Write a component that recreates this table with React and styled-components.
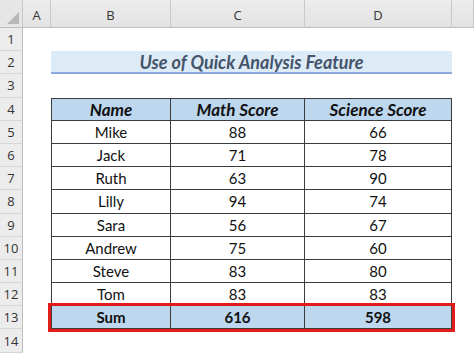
import React from 'react'
import styled, { createGlobalStyle } from 'styled-components'

const rows = [
  ['Mike', 88, 66],
  ['Jack', 71, 78],
  ['Ruth', 63, 90],
  ['Lilly', 94, 74],
  ['Sara', 56, 67],
  ['Andrew', 75, 60],
  ['Steve', 83, 80],
  ['Tom', 83, 83]
]

export default function App () {
  return (
    <>
      <GlobalStyle />
      <Sheet>
        <Corner><CornerMark /></Corner>
        <ColHead>A</ColHead>
        <ColHead>B</ColHead>
        <ColHead>C</ColHead>
        <ColHead>D</ColHead>
        <ColHead />

        <RowHead>1</RowHead>
        <Blank $span={5} />

        <RowHead>2</RowHead>
        <Blank />
        <Title>Use of Quick Analysis Feature</Title>
        <Blank />

        <RowHead>3</RowHead>
        <Blank $span={5} />

        <RowHead>4</RowHead>
        <Blank />
        <TableRow>
          <Cell $head $first>Name</Cell>
          <Cell $head>Math Score</Cell>
          <Cell $head>Science Score</Cell>
        </TableRow>
        <Blank />

        {rows.map(([name, math, science], i) => (
          <React.Fragment key={name}>
            <RowHead>{i + 5}</RowHead>
            <Blank />
            <TableRow>
              <Cell $first>{name}</Cell>
              <Cell>{math}</Cell>
              <Cell>{science}</Cell>
            </TableRow>
            <Blank />
          </React.Fragment>
        ))}

        <RowHead>13</RowHead>
        <Blank />
        <TableRow $selected>
          <Cell $sum $first>Sum</Cell>
          <Cell $sum>616</Cell>
          <Cell $sum>598</Cell>
        </TableRow>
        <Blank />

        <RowHead>14</RowHead>
        <Blank $span={5} />
      </Sheet>
    </>
  )
}

const GlobalStyle = createGlobalStyle`
  html, body {
    margin: 0;
    padding: 0;
    background: #fff;
  }
  body {
    font-family: Lato, "Open Sans", sans-serif;
    color: #111;
  }
`

const Sheet = styled.div`
  display: grid;
  grid-template-columns: 23px 28px 120px 134px 147px 1fr;
  grid-template-rows: 28px repeat(14, 23.2px);
  width: 474px;
  height: 353px;
  overflow: hidden;
  background: #fff;
`

const Corner = styled.div`
  position: relative;
  background: #e6e6e6;
  border-right: 1px solid #c9c9c9;
  border-bottom: 1px solid #bdbdbd;
`

const CornerMark = styled.div`
  position: absolute;
  right: 3px;
  bottom: 3px;
  width: 0;
  height: 0;
  border-left: 12px solid transparent;
  border-bottom: 12px solid #b8b8b8;
`

const ColHead = styled.div`
  display: flex;
  align-items: center;
  justify-content: center;
  padding-top: 3px;
  background: linear-gradient(#ececec, #e3e3e3);
  border-right: 1px solid #c9c9c9;
  border-bottom: 1px solid #bdbdbd;
  font-family: "Open Sans", sans-serif;
  font-size: 13px;
  color: #333;
  box-sizing: border-box;
`

const RowHead = styled.div`
  display: flex;
  align-items: center;
  justify-content: center;
  background: #ececec;
  border-right: 1px solid #bdbdbd;
  border-bottom: 1px solid #d6d6d6;
  font-family: "Open Sans", sans-serif;
  font-size: 13px;
  color: #333;
  box-sizing: border-box;
`

const Blank = styled.div`
  grid-column: span ${p => p.$span || 1};
`

const Title = styled.div`
  grid-column: span 3;
  display: flex;
  align-items: center;
  justify-content: center;
  padding-top: 1px;
  background: #ddebf7;
  border-bottom: 2px solid #8ea9db;
  box-sizing: border-box;
  font-size: 18px;
  font-weight: 700;
  font-style: italic;
  color: #44546a;
`

const TableRow = styled.div`
  grid-column: span 3;
  display: grid;
  grid-template-columns: 120px 134px 147px;
  outline: ${p => (p.$selected ? '3px solid #e31b1b' : 'none')};
  outline-offset: 0;
`

const Cell = styled.div`
  display: flex;
  align-items: center;
  justify-content: center;
  box-sizing: border-box;
  border-right: 1px solid #3c3c3c;
  border-bottom: 1px solid #3c3c3c;
  border-left: ${p => (p.$first ? '1px solid #3c3c3c' : 'none')};
  border-top: ${p => (p.$head ? '1px solid #3c3c3c' : 'none')};
  background: ${p => (p.$head || p.$sum ? '#bdd7ee' : '#fff')};
  font-size: ${p => (p.$head ? '17px' : '15px')};
  font-weight: ${p => (p.$head || p.$sum ? 700 : 400)};
  font-style: ${p => (p.$head ? 'italic' : 'normal')};
  color: #111;
`
